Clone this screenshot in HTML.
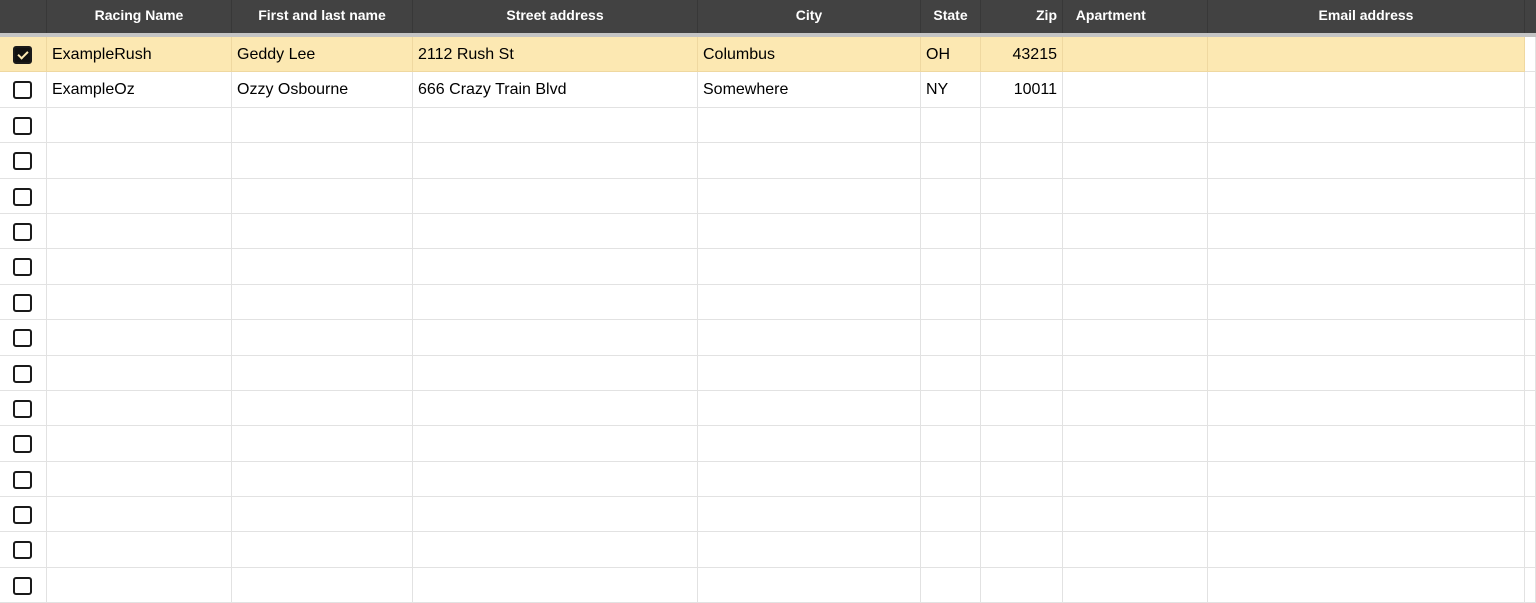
<!DOCTYPE html>
<html><head><meta charset="utf-8"><style>
*{margin:0;padding:0;box-sizing:border-box}
body{width:1536px;height:572px;overflow:hidden;background:#fff;font-family:"Liberation Sans",Arial,sans-serif;position:relative}
.hdr{position:absolute;left:0;top:0;width:1536px;height:33px;background:#424242;display:flex}
.hdr div{height:33px;border-right:1px solid #383838;color:#fff;font-weight:bold;font-size:14px;line-height:31px;padding:0 5px;white-space:nowrap}
.strip{position:absolute;left:0;top:33px;width:1536px;height:4px;background:#c4c4c4}
.rows{position:absolute;left:0;top:37px;width:1536px}
.r{display:flex;height:35.4px}
.r div{height:100%;border-right:1px solid #e2e2e2;border-bottom:1px solid #e2e2e2;font-size:16px;line-height:35px;padding:0 5px;white-space:nowrap;color:#000}
.r.hl div{background:#fce8b2;border-color:#efd8a0}
.r.hl div:last-child{background:#fff;border-color:#e2e2e2}
.cb{position:relative}
.cb i{position:absolute;left:13px;top:9px;width:19px;height:18px;border:2.5px solid #1a1a1a;border-radius:3px;background:#fff}
.cb i.on{background:#111}
.cb i.on:after{content:"";position:absolute;left:5px;top:1px;width:4px;height:8px;border-right:2px solid #fce8b2;border-bottom:2px solid #fce8b2;transform:rotate(45deg)}
.c0{width:47px}.c1{width:185px}.c2{width:181px}.c3{width:285px}.c4{width:223px}.c5{width:60px}.c6{width:82px}.c7{width:145px}.c8{width:317px}.c9{width:11px}
.ce{text-align:center}.rt{text-align:right}
</style></head><body>
<div class="hdr">
<div class="c0"></div><div class="c1 ce">Racing Name</div><div class="c2 ce">First and last name</div><div class="c3 ce">Street address</div><div class="c4 ce">City</div><div class="c5 ce">State</div><div class="c6 rt">Zip</div><div class="c7">&nbsp;&nbsp;Apartment</div><div class="c8 ce">Email address</div><div class="c9" style="border:none"></div>
</div>
<div class="strip"></div>
<div class="rows">
<div class="r hl"><div class="c0 cb"><i class="on"></i></div><div class="c1">ExampleRush</div><div class="c2">Geddy Lee</div><div class="c3">2112 Rush St</div><div class="c4">Columbus</div><div class="c5">OH</div><div class="c6 rt">43215</div><div class="c7"></div><div class="c8"></div><div class="c9"></div></div>
<div class="r"><div class="c0 cb"><i></i></div><div class="c1">ExampleOz</div><div class="c2">Ozzy Osbourne</div><div class="c3">666 Crazy Train Blvd</div><div class="c4">Somewhere</div><div class="c5">NY</div><div class="c6 rt">10011</div><div class="c7"></div><div class="c8"></div><div class="c9"></div></div>
<div class="r"><div class="c0 cb"><i></i></div><div class="c1"></div><div class="c2"></div><div class="c3"></div><div class="c4"></div><div class="c5"></div><div class="c6"></div><div class="c7"></div><div class="c8"></div><div class="c9"></div></div>
<div class="r"><div class="c0 cb"><i></i></div><div class="c1"></div><div class="c2"></div><div class="c3"></div><div class="c4"></div><div class="c5"></div><div class="c6"></div><div class="c7"></div><div class="c8"></div><div class="c9"></div></div>
<div class="r"><div class="c0 cb"><i></i></div><div class="c1"></div><div class="c2"></div><div class="c3"></div><div class="c4"></div><div class="c5"></div><div class="c6"></div><div class="c7"></div><div class="c8"></div><div class="c9"></div></div>
<div class="r"><div class="c0 cb"><i></i></div><div class="c1"></div><div class="c2"></div><div class="c3"></div><div class="c4"></div><div class="c5"></div><div class="c6"></div><div class="c7"></div><div class="c8"></div><div class="c9"></div></div>
<div class="r"><div class="c0 cb"><i></i></div><div class="c1"></div><div class="c2"></div><div class="c3"></div><div class="c4"></div><div class="c5"></div><div class="c6"></div><div class="c7"></div><div class="c8"></div><div class="c9"></div></div>
<div class="r"><div class="c0 cb"><i></i></div><div class="c1"></div><div class="c2"></div><div class="c3"></div><div class="c4"></div><div class="c5"></div><div class="c6"></div><div class="c7"></div><div class="c8"></div><div class="c9"></div></div>
<div class="r"><div class="c0 cb"><i></i></div><div class="c1"></div><div class="c2"></div><div class="c3"></div><div class="c4"></div><div class="c5"></div><div class="c6"></div><div class="c7"></div><div class="c8"></div><div class="c9"></div></div>
<div class="r"><div class="c0 cb"><i></i></div><div class="c1"></div><div class="c2"></div><div class="c3"></div><div class="c4"></div><div class="c5"></div><div class="c6"></div><div class="c7"></div><div class="c8"></div><div class="c9"></div></div>
<div class="r"><div class="c0 cb"><i></i></div><div class="c1"></div><div class="c2"></div><div class="c3"></div><div class="c4"></div><div class="c5"></div><div class="c6"></div><div class="c7"></div><div class="c8"></div><div class="c9"></div></div>
<div class="r"><div class="c0 cb"><i></i></div><div class="c1"></div><div class="c2"></div><div class="c3"></div><div class="c4"></div><div class="c5"></div><div class="c6"></div><div class="c7"></div><div class="c8"></div><div class="c9"></div></div>
<div class="r"><div class="c0 cb"><i></i></div><div class="c1"></div><div class="c2"></div><div class="c3"></div><div class="c4"></div><div class="c5"></div><div class="c6"></div><div class="c7"></div><div class="c8"></div><div class="c9"></div></div>
<div class="r"><div class="c0 cb"><i></i></div><div class="c1"></div><div class="c2"></div><div class="c3"></div><div class="c4"></div><div class="c5"></div><div class="c6"></div><div class="c7"></div><div class="c8"></div><div class="c9"></div></div>
<div class="r"><div class="c0 cb"><i></i></div><div class="c1"></div><div class="c2"></div><div class="c3"></div><div class="c4"></div><div class="c5"></div><div class="c6"></div><div class="c7"></div><div class="c8"></div><div class="c9"></div></div>
<div class="r"><div class="c0 cb"><i></i></div><div class="c1"></div><div class="c2"></div><div class="c3"></div><div class="c4"></div><div class="c5"></div><div class="c6"></div><div class="c7"></div><div class="c8"></div><div class="c9"></div></div>
</div>
</body></html>
